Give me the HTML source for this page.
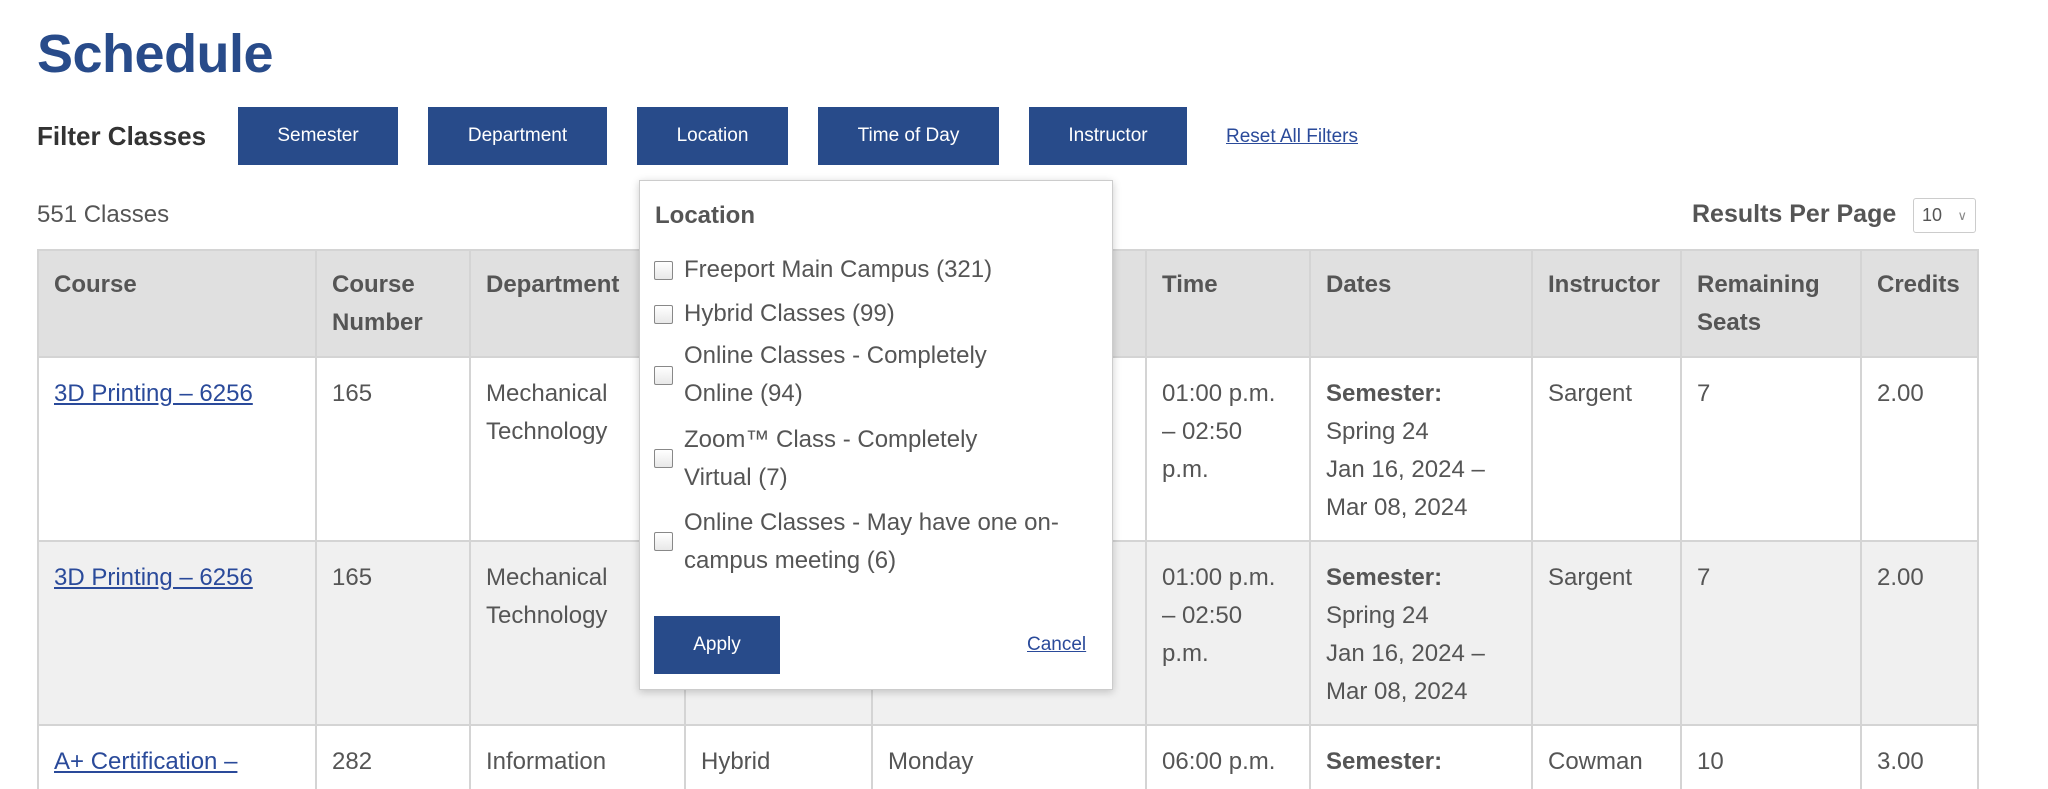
<!DOCTYPE html>
<html style="height:789px;overflow:hidden"><head><meta charset="utf-8"><style>
body{margin:0;width:2048px;height:789px;overflow:hidden;background:#fff;font-family:"Liberation Sans",Arial,sans-serif;color:#555;position:relative}
.a{position:absolute;white-space:nowrap}
h1{position:absolute;left:37px;top:23px;margin:0;font-size:54px;font-weight:bold;color:#284b8a;letter-spacing:-0.5px}
.btn{position:absolute;top:107px;height:58px;background:#284b8a;color:#fff;font-size:19px;display:flex;align-items:center;justify-content:center}
.clip{position:absolute;left:0;top:0;width:2048px;height:789px;overflow:hidden}
table{position:absolute;left:37px;top:249px;border-collapse:collapse;table-layout:fixed;width:1940px;font-size:24px}
td,th{border:2px solid #d4d4d4;vertical-align:top;text-align:left;padding:17px 15px 0 15px;line-height:38px;overflow:hidden}
th{background:#e0e0e0;font-weight:bold;color:#555;padding-top:15px}
tr.g td{background:#f0f0f0}
a{color:#2a4a9a;text-decoration:underline}
.pop{position:absolute;left:639px;top:180px;width:472px;height:508px;background:#fff;border:1px solid #ccc;box-shadow:0 2px 8px rgba(0,0,0,.2)}
.cb{position:absolute;width:17px;height:17px;border:1px solid #888;background:linear-gradient(#fff,#e8e8e8);border-radius:2px}
.it{position:absolute;left:44px;font-size:24px;line-height:38px;color:#555;white-space:nowrap}
</style></head><body>
<h1>Schedule</h1>
<div class="a" style="left:37px;top:121px;font-size:26px;font-weight:bold;color:#333">Filter Classes</div>
<div class="btn" style="left:238px;width:160px">Semester</div>
<div class="btn" style="left:428px;width:179px">Department</div>
<div class="btn" style="left:637px;width:151px">Location</div>
<div class="btn" style="left:818px;width:181px">Time of Day</div>
<div class="btn" style="left:1029px;width:158px">Instructor</div>
<a class="a" style="left:1226px;top:126px;font-size:19px">Reset All Filters</a>
<div class="a" style="left:37px;top:201px;font-size:24px;color:#555">551 Classes</div>
<div class="a" style="left:1692px;top:200px;font-size:25px;font-weight:bold;color:#555">Results Per Page</div>
<div class="a" style="left:1913px;top:198px;width:63px;height:35px;border:1px solid #ccc;border-radius:3px;box-sizing:border-box;font-size:18px;line-height:33px;padding-left:8px;color:#555">10<span style="position:absolute;right:8px;top:0;font-size:13px;color:#888">&#8744;</span></div>
<div class="clip">
<table>
<colgroup><col style="width:278px"><col style="width:154px"><col style="width:215px"><col style="width:187px"><col style="width:274px"><col style="width:164px"><col style="width:222px"><col style="width:149px"><col style="width:180px"><col style="width:117px"></colgroup>
<tr style="height:107px"><th>Course</th><th>Course Number</th><th>Department</th><th>Location</th><th>Days</th><th>Time</th><th>Dates</th><th>Instructor</th><th>Remaining Seats</th><th>Credits</th></tr>
<tr style="height:184px"><td><a>3D Printing – 6256</a></td><td>165</td><td>Mechanical Technology</td><td>Freeport</td><td>Tuesday, Thursday</td><td>01:00 p.m. – 02:50 p.m.</td><td><b>Semester:</b><br>Spring 24<br>Jan 16, 2024 – Mar 08, 2024</td><td>Sargent</td><td>7</td><td>2.00</td></tr>
<tr class="g" style="height:184px"><td><a>3D Printing – 6256</a></td><td>165</td><td>Mechanical Technology</td><td>Freeport</td><td>Tuesday, Thursday</td><td>01:00 p.m. – 02:50 p.m.</td><td><b>Semester:</b><br>Spring 24<br>Jan 16, 2024 – Mar 08, 2024</td><td>Sargent</td><td>7</td><td>2.00</td></tr>
<tr style="height:184px"><td><a>A+ Certification –<br>6000</a></td><td>282</td><td>Information Technology</td><td>Hybrid Classes</td><td>Monday</td><td>06:00 p.m. – 08:00 p.m.</td><td><b>Semester:</b><br>Spring 24</td><td>Cowman</td><td>10</td><td>3.00</td></tr>
</table>
</div>
<div class="pop">
<div class="a" style="left:15px;top:21px;font-size:24px;font-weight:bold;color:#555">Location</div>
<div class="cb" style="left:14px;top:80px"></div><div class="it" style="top:70px">Freeport Main Campus (321)</div>
<div class="cb" style="left:14px;top:124px"></div><div class="it" style="top:114px">Hybrid Classes (99)</div>
<div class="cb" style="left:14px;top:185px"></div><div class="it" style="top:156px">Online Classes - Completely<br>Online (94)</div>
<div class="cb" style="left:14px;top:268px"></div><div class="it" style="top:240px">Zoom™ Class - Completely<br>Virtual (7)</div>
<div class="cb" style="left:14px;top:351px"></div><div class="it" style="top:323px">Online Classes - May have one on-<br>campus meeting (6)</div>
<div class="a" style="left:14px;top:435px;width:126px;height:58px;background:#284b8a;color:#fff;font-size:19px;display:flex;align-items:center;justify-content:center">Apply</div>
<a class="a" style="left:387px;top:453px;font-size:19px">Cancel</a>
</div>
</body></html>
